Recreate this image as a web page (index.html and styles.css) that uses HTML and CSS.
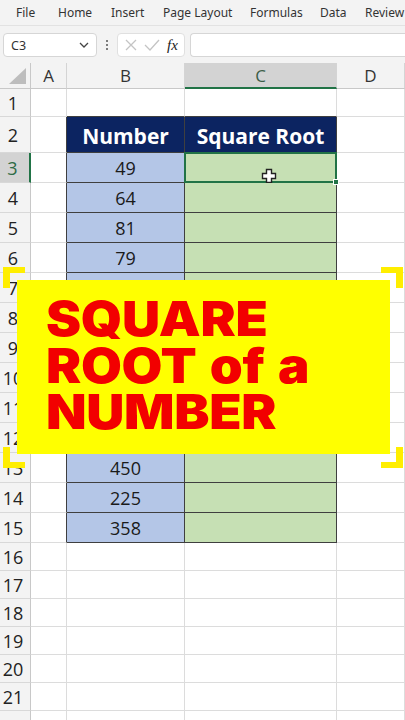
FILE: index.html
```html
<!DOCTYPE html>
<html>
<head>
<meta charset="utf-8">
<link rel="stylesheet" href="styles.css">
</head>
<body>
<div class="app">
  <div class="menu">
    <span class="m1">File</span><span class="m2">Home</span><span class="m3">Insert</span><span class="m4">Page Layout</span><span class="m5">Formulas</span><span class="m6">Data</span><span class="m7">Review</span>
  </div>
  <div class="fbar">
    <div class="namebox"><span>C3</span>
      <svg class="chev" width="10" height="6" viewBox="0 0 10 6"><path d="M1 1 L5 5 L9 1" fill="none" stroke="#444" stroke-width="1.3"/></svg>
    </div>
    <div class="vdots"><i></i><i></i><i></i></div>
    <div class="fxbox">
      <svg width="14" height="14" viewBox="0 0 14 14"><path d="M2 2 L12 12 M12 2 L2 12" stroke="#c4c4c4" stroke-width="1.3"/></svg>
      <svg width="16" height="14" viewBox="0 0 16 14"><path d="M1 7 L6 12 L15 2" fill="none" stroke="#c4c4c4" stroke-width="1.3"/></svg>
      <span class="fx">fx</span>
    </div>
    <div class="finput"></div>
  </div>
  <div class="sheet">
    <div class="hd corner"><svg width="20" height="18" viewBox="0 0 20 18"><path d="M19 1 L19 17 L2 17 Z" fill="#bdbdbd"/></svg></div>
    <div class="hd col">A</div><div class="hd col">B</div><div class="hd col sel">C</div><div class="hd col">D</div>

    <div class="rh">1</div><div class="c"></div><div class="c tb-top"></div><div class="c tb-top"></div><div class="c"></div>
    <div class="rh">2</div><div class="c tb-left"></div><div class="c th">Number</div><div class="c th">Square Root</div><div class="c"></div>
    <div class="rh sel">3</div><div class="c tb-left"></div><div class="c b">49</div><div class="c g active"><span class="handle"></span><svg class="cursor" width="16" height="16" viewBox="0 0 16 16"><path d="M5.5 1.5 h5 v4 h4 v5 h-4 v4 h-5 v-4 h-4 v-5 h4 z" fill="#fff" stroke="#222" stroke-width="1.4"/></svg></div><div class="c"></div>
    <div class="rh">4</div><div class="c tb-left"></div><div class="c b">64</div><div class="c g"></div><div class="c"></div>
    <div class="rh">5</div><div class="c tb-left"></div><div class="c b">81</div><div class="c g"></div><div class="c"></div>
    <div class="rh">6</div><div class="c tb-left"></div><div class="c b">79</div><div class="c g"></div><div class="c"></div>
    <div class="rh">7</div><div class="c tb-left"></div><div class="c b"></div><div class="c g"></div><div class="c"></div>
    <div class="rh">8</div><div class="c tb-left"></div><div class="c b"></div><div class="c g"></div><div class="c"></div>
    <div class="rh">9</div><div class="c tb-left"></div><div class="c b"></div><div class="c g"></div><div class="c"></div>
    <div class="rh">10</div><div class="c tb-left"></div><div class="c b"></div><div class="c g"></div><div class="c"></div>
    <div class="rh">11</div><div class="c tb-left"></div><div class="c b"></div><div class="c g"></div><div class="c"></div>
    <div class="rh">12</div><div class="c tb-left"></div><div class="c b"></div><div class="c g"></div><div class="c"></div>
    <div class="rh">13</div><div class="c tb-left"></div><div class="c b">450</div><div class="c g"></div><div class="c"></div>
    <div class="rh">14</div><div class="c tb-left"></div><div class="c b">225</div><div class="c g"></div><div class="c"></div>
    <div class="rh">15</div><div class="c tb-left"></div><div class="c b">358</div><div class="c g"></div><div class="c"></div>
    <div class="rh">16</div><div class="c"></div><div class="c"></div><div class="c"></div><div class="c"></div>
    <div class="rh">17</div><div class="c"></div><div class="c"></div><div class="c"></div><div class="c"></div>
    <div class="rh">18</div><div class="c"></div><div class="c"></div><div class="c"></div><div class="c"></div>
    <div class="rh">19</div><div class="c"></div><div class="c"></div><div class="c"></div><div class="c"></div>
    <div class="rh">20</div><div class="c"></div><div class="c"></div><div class="c"></div><div class="c"></div>
    <div class="rh">21</div><div class="c"></div><div class="c"></div><div class="c"></div><div class="c"></div>
    <div class="rh"></div><div class="c"></div><div class="c"></div><div class="c"></div><div class="c"></div>
  </div>

  <div class="overlay">
    <span class="br tl"></span><span class="br tr"></span><span class="br bl"></span><span class="br bz"></span>
    <div class="banner">
      <div class="title">SQUARE<br>ROOT of a<br>NUMBER</div>
    </div>
  </div>
</div>
</body>
</html>
```

FILE: styles.css
```css
* { box-sizing: border-box; }
html, body { margin: 0; padding: 0; }
body { width: 405px; height: 720px; overflow: hidden; background: #fff; }
.app { position: relative; width: 405px; height: 720px; overflow: hidden; font-family: "Noto Sans", "Open Sans", sans-serif; }

.menu {
  height: 25px; background: #f3f3f3;
  display: flex; align-items: center;
  padding-left: 16px; font-size: 12px; color: #333; white-space: nowrap;
}
.menu span { flex: none; }
.m1 { width: 42px; }
.m2 { width: 53px; }
.m3 { width: 52px; }
.m4 { width: 87px; }
.m5 { width: 70px; }
.m6 { width: 45px; }
.m7 { width: 40px; }

.fbar {
  height: 38px; background: #f3f3f3;
  display: flex; align-items: flex-start; padding-top: 7px; padding-left: 3px;
  border-top: 1px solid #e2e2e2;
}
.namebox {
  width: 94px; height: 24px; background: #fff; border: 1px solid #d6d6d6; border-radius: 4px;
  display: flex; align-items: center; justify-content: space-between; padding: 0 7px 0 7px;
  font-size: 12.5px; color: #333;
}
.vdots { width: 20px; height: 24px; display: flex; flex-direction: column; align-items: center; justify-content: center; gap: 2px; }
.vdots i { width: 2px; height: 2px; background: #555; border-radius: 1px; display: block; }
.fxbox {
  width: 68px; height: 24px; background: #fff; border: 1px solid #e0e0e0; border-radius: 4px;
  display: flex; align-items: center; gap: 6px; padding-left: 6px;
}
.fx { font-family: "Liberation Serif", serif; font-style: italic; font-size: 15px; color: #222; margin-left: 1px; }
.finput { flex: 1; height: 24px; margin-left: 5px; background: #fff; border: 1px solid #d6d6d6; border-radius: 4px 0 0 4px; border-right: none; }

.sheet {
  display: grid;
  grid-template-columns: 31px 36px 118px 152px 68px;
  grid-template-rows: 26px 28px 36px repeat(13, 30px) repeat(7, 28px);
  font-family: "Open Sans", "Noto Sans", sans-serif;
}
.hd {
  background: #f3f3f3; border-right: 1px solid #d4d4d4; border-bottom: 1px solid #c8c8c8;
  display: flex; align-items: center; justify-content: center;
  font-size: 17px; color: #333;
}
.corner { justify-content: flex-end; align-items: flex-end; padding: 0 3px 3px 0; border-right: 1px solid #c8c8c8; }
.hd.sel { background: #d3d3d3; border-bottom: 2px solid #217346; color: #3b5e48; }
.rh {
  background: #f3f3f3; border-right: 1px solid #c8c8c8; border-bottom: 1px solid #d8d8d8;
  display: flex; align-items: center; justify-content: center; padding-right: 4px;
  font-size: 18px; color: #222;
}
.rh.sel { background: #d3d3d3; border-right: 2px solid #217346; color: #2f6b45; }
.c {
  position: relative;
  border-right: 1px solid #dcdcdc; border-bottom: 1px solid #dcdcdc;
  display: flex; align-items: center; justify-content: center;
  font-size: 18px; color: #1a1a1a;
}
.c.tb-top { border-bottom: 1px solid #3f3f3f; }
.c.tb-left { border-right: 1px solid #3f3f3f; }
.c.th { background: #0c2461; color: #fff; font-weight: 700; font-size: 21px; border-right: 1px solid #3f3f3f; border-bottom: 1px solid #3f3f3f; padding-top: 2px; }
.c.b { background: #b4c6e7; border-right: 1px solid #3f3f3f; border-bottom: 1px solid #3f3f3f; }
.c.g { background: #c6e0b4; border-right: 1px solid #3f3f3f; border-bottom: 1px solid #3f3f3f; }
.c.active { border: 2px solid #217346; margin: -1px 0 0 -1px; }
.handle { position: absolute; right: -4px; bottom: -4px; width: 6px; height: 6px; background: #217346; border: 1px solid #fff; z-index: 2; }
.cursor { position: absolute; left: 75px; top: 14px; }

.overlay { position: absolute; left: 0; top: 0; width: 405px; height: 720px; pointer-events: none; }
.banner {
  position: absolute; left: 17px; top: 280px; width: 373px; height: 174px;
  background: #ffff00;
  padding: 16px 0 0 29px;
}
.title {
  font-family: "Inter", "Noto Sans", sans-serif; font-weight: 900;
  font-size: 48px; line-height: 46.5px; color: #f20000; letter-spacing: -0.3px; word-spacing: 3px;
  transform: scaleX(1.1); transform-origin: left top; white-space: nowrap;
}
.br { position: absolute; width: 22px; height: 21px; border-color: #ffee00; border-style: solid; border-width: 0; }
.br.tl { left: 3px; top: 267px; border-left-width: 7px; border-top-width: 6px; }
.br.tr { left: 381px; top: 267px; border-right-width: 7px; border-top-width: 6px; }
.br.bl { left: 3px; top: 447px; border-left-width: 7px; border-bottom-width: 6px; }
.br.bz { left: 381px; top: 447px; border-right-width: 7px; border-bottom-width: 6px; }
```
